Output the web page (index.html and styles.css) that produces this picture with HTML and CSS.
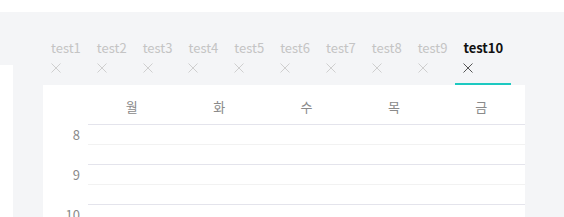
FILE: index.html
```html
<!DOCTYPE html>
<html lang="ko">
<head>
    <meta charset="UTF-8">
    <meta name="viewport" content="width=device-width, initial-scale=1.0">
    <title>Timetable</title>
    <link rel="stylesheet" href="styles.css">
</head>
<body>

    <div class="page">
        <div class="side"></div>

        <div class="main">
            <ul class="tabs">
                <li class="tab"><span class="tab-name">test1</span><svg class="close" viewBox="0 0 10 10"><path d="M0.5 0.5L9.5 9.5M9.5 0.5L0.5 9.5"/></svg></li>
                <li class="tab"><span class="tab-name">test2</span><svg class="close" viewBox="0 0 10 10"><path d="M0.5 0.5L9.5 9.5M9.5 0.5L0.5 9.5"/></svg></li>
                <li class="tab"><span class="tab-name">test3</span><svg class="close" viewBox="0 0 10 10"><path d="M0.5 0.5L9.5 9.5M9.5 0.5L0.5 9.5"/></svg></li>
                <li class="tab"><span class="tab-name">test4</span><svg class="close" viewBox="0 0 10 10"><path d="M0.5 0.5L9.5 9.5M9.5 0.5L0.5 9.5"/></svg></li>
                <li class="tab"><span class="tab-name">test5</span><svg class="close" viewBox="0 0 10 10"><path d="M0.5 0.5L9.5 9.5M9.5 0.5L0.5 9.5"/></svg></li>
                <li class="tab"><span class="tab-name">test6</span><svg class="close" viewBox="0 0 10 10"><path d="M0.5 0.5L9.5 9.5M9.5 0.5L0.5 9.5"/></svg></li>
                <li class="tab"><span class="tab-name">test7</span><svg class="close" viewBox="0 0 10 10"><path d="M0.5 0.5L9.5 9.5M9.5 0.5L0.5 9.5"/></svg></li>
                <li class="tab"><span class="tab-name">test8</span><svg class="close" viewBox="0 0 10 10"><path d="M0.5 0.5L9.5 9.5M9.5 0.5L0.5 9.5"/></svg></li>
                <li class="tab"><span class="tab-name">test9</span><svg class="close" viewBox="0 0 10 10"><path d="M0.5 0.5L9.5 9.5M9.5 0.5L0.5 9.5"/></svg></li>
                <li class="tab active"><span class="tab-name">test10</span><svg class="close" viewBox="0 0 10 10"><path d="M0.5 0.5L9.5 9.5M9.5 0.5L0.5 9.5"/></svg></li>
            </ul>

            <div class="timetable">
                <div class="days">
                    <div class="day">월</div>
                    <div class="day">화</div>
                    <div class="day">수</div>
                    <div class="day">목</div>
                    <div class="day">금</div>
                </div>
                <div class="hour">
                    <div class="hour-label">8</div>
                    <div class="hour-cells"></div>
                </div>
                <div class="hour">
                    <div class="hour-label">9</div>
                    <div class="hour-cells"></div>
                </div>
                <div class="hour">
                    <div class="hour-label">10</div>
                    <div class="hour-cells"></div>
                </div>
            </div>
        </div>
    </div>

</body>
</html>
```

FILE: styles.css
```css
body {
    margin: 0;
    padding: 0;
    background: white;
    font-family: "Noto Sans CJK KR", "Noto Sans", sans-serif;
    overflow: hidden;
}

.page {
    display: flex;
    margin-top: 12px;
    height: 205px;
    background-color: #f4f5f7;
}

.side {
    width: 13px;
    margin-top: 53px;
    background: white;
}

.main {
    width: 482px;
    margin-left: 30px;
    padding-top: 26px;
}

.tabs {
    display: flex;
    list-style: none;
    margin: 0;
    padding: 0;
}

.tab {
    display: flex;
    flex-direction: column;
    padding: 0 8px 10px;
    border-bottom: 2px solid transparent;
}

.tab-name {
    font-size: 13px;
    line-height: 20px;
    color: #c4c4c4;
}

.close {
    width: 10px;
    height: 10px;
    margin-top: 5px;
    fill: none;
    stroke: #cfcfcf;
    stroke-width: 1;
}

.tab.active {
    border-bottom: 2px solid #1dc9c1;
}

.tab.active .tab-name {
    color: #111;
    font-weight: bold;
}

.tab.active .close {
    stroke: #555;
}

.timetable {
    background: white;
    height: 200px;
}

.days {
    display: flex;
    margin-left: 45px;
    height: 39px;
    border-bottom: 1px solid #e4e4ec;
}

.day {
    flex: 1;
    text-align: center;
    font-size: 13px;
    color: #8a8a8a;
    padding-top: 12px;
}

.hour {
    display: flex;
    height: 40px;
}

.hour-label {
    width: 37px;
    padding-right: 8px;
    text-align: right;
    font-size: 13px;
    line-height: 20px;
    color: #8a8a8a;
}

.hour-cells {
    flex: 1;
    border-bottom: 1px solid #e4e4ec;
    background: linear-gradient(#fff 19px, #f2f2f2 19px, #f2f2f2 20px, #fff 20px);
}
```
